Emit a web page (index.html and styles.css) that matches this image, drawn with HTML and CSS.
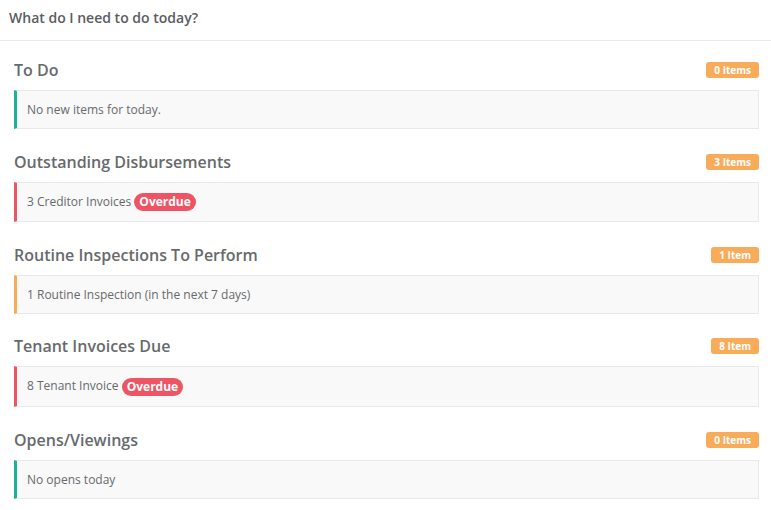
FILE: index.html
```html
<!DOCTYPE html>
<html>
<head>
<meta charset="utf-8">
<link rel="stylesheet" href="styles.css">
</head>
<body>
<div class="header">What do I need to do today?</div>
<div class="content">
  <div class="section">
    <div class="title-row"><h3 class="title">To Do</h3><span class="badge">0 Items</span></div>
    <div class="box box-green">No new items for today.</div>
  </div>
  <div class="section">
    <div class="title-row"><h3 class="title">Outstanding Disbursements</h3><span class="badge">3 Items</span></div>
    <div class="box box-red">3 Creditor Invoices <span class="pill">Overdue</span></div>
  </div>
  <div class="section">
    <div class="title-row"><h3 class="title">Routine Inspections To Perform</h3><span class="badge">1 Item</span></div>
    <div class="box box-yellow">1 Routine Inspection (in the next 7 days)</div>
  </div>
  <div class="section">
    <div class="title-row"><h3 class="title">Tenant Invoices Due</h3><span class="badge">8 Item</span></div>
    <div class="box box-red">8 Tenant Invoice <span class="pill">Overdue</span></div>
  </div>
  <div class="section">
    <div class="title-row"><h3 class="title">Opens/Viewings</h3><span class="badge">0 Items</span></div>
    <div class="box box-green">No opens today</div>
  </div>
</div>
</body>
</html>
```

FILE: styles.css
```css
html, body {
  margin: 0;
  padding: 0;
  background: #ffffff;
  font-family: "Open Sans", "Noto Sans", sans-serif;
  color: #676a6c;
}
.header {
  height: 40px;
  line-height: 35px;
  padding: 0 9px;
  font-size: 14px;
  font-weight: 600;
  color: #5a5d5f;
  border-bottom: 1px solid #e7eaec;
}
.content {
  padding: 0 12px 0 14px;
}
.section {
  margin-top: 21.5px;
}
.section:first-child {
  margin-top: 18px;
}
.title-row {
  display: flex;
  align-items: center;
  justify-content: space-between;
  height: 22px;
  margin-bottom: 9px;
}
.title {
  margin: 0;
  font-size: 16px;
  font-weight: 600;
  line-height: 22px;
  color: #676a6c;
}
.badge {
  background: #f8ac59;
  color: #ffffff;
  font-size: 10px;
  font-weight: 700;
  line-height: 10px;
  padding: 3px 8px;
  border-radius: 3px;
}
.box {
  background: #f9f9f9;
  border: 1px solid #e7eaec;
  border-left-width: 3px;
  padding: 10px 10px;
  font-size: 12px;
  line-height: 17px;
  color: #676a6c;
}
.box-green { border-left-color: #1ab394; }
.box-red { border-left-color: #ed5565; }
.box-yellow { border-left-color: #f8ac59; }
.pill {
  display: inline-block;
  background: #ed5565;
  color: #ffffff;
  font-size: 12px;
  font-weight: 700;
  line-height: 16px;
  padding: 1px 5px;
  border-radius: 9px;
  vertical-align: middle;
}
```
